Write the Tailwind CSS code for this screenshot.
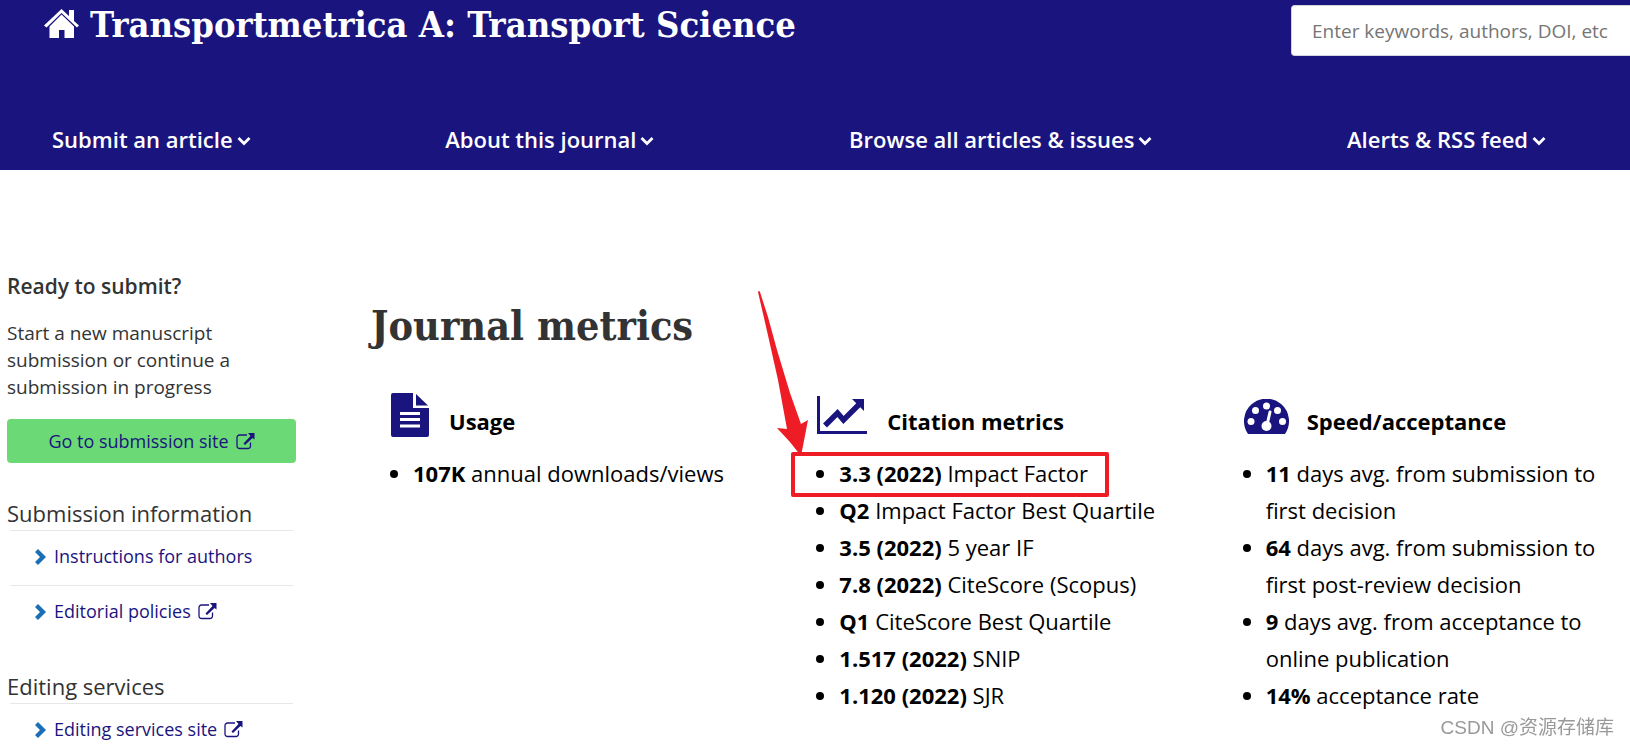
<!DOCTYPE html>
<html lang="en">
  <head>
    <meta charset="UTF-8" />
    <meta name="viewport" content="width=device-width, initial-scale=1.0" />
    <script src="https://cdn.jsdelivr.net/npm/@tailwindcss/browser@4"></script>
    <title>Transportmetrica A: Transport Science</title>
  </head>
  <body class="min-h-screen overflow-hidden bg-white font-['Open_Sans','Noto_Sans_CJK_SC',sans-serif] text-black">
    <!-- Shared icons -->
    <svg class="hidden">
      <symbol id="chevron-down" viewBox="0 0 14 10">
        <path d="M1.5 2 7 7.5 12.5 2" fill="none" stroke="currentColor" stroke-width="2.8" />
      </symbol>
      <symbol id="chevron-right" viewBox="0 0 12 16">
        <path d="M3 0 11 8 3 16 0 13 5 8 0 3Z" fill="currentColor" />
      </symbol>
      <symbol id="external" viewBox="0 0 19 17">
        <path d="M11 2H3.5A2.5 2.5 0 0 0 1 4.5V13a2.5 2.5 0 0 0 2.5 2.5H12A2.5 2.5 0 0 0 14.5 13V9.5" fill="none" stroke="currentColor" stroke-width="1.3" />
        <path d="M12 0H18.5V6.5L16.5 5 9 12 7.5 10.5 14.5 3Z" fill="currentColor" />
      </symbol>
    </svg>

    <!-- Header -->
    <header class="bg-[#1a147e] text-white">
      <div class="flex items-start justify-between pl-11">
        <a href="#" class="flex items-center gap-[10px]">
          <svg class="h-8 w-9" viewBox="0 0 36 32" fill="currentColor">
            <path d="M17.5 1 25 8V2H30V13L35 17.5 33 19.5 17.5 5 2.5 19.5 0 17.5Z" />
            <path d="M17.5 6.5 30 18.5V30H20.5V22H15V30H5.5V18.5Z" />
          </svg>
          <h1 class="font-['DejaVu_Serif_Condensed','DejaVu_Serif',serif] text-[36px] leading-12 font-bold">Transportmetrica A: Transport Science</h1>
        </a>
        <div class="w-[339px] pt-[5px]">
          <input type="text" aria-label="Search" placeholder="Enter keywords, authors, DOI, etc" class="h-[51px] w-full rounded-l border border-r-0 border-gray-300 bg-white pl-5 text-[19px] text-gray-700 placeholder:text-[#757575]" />
        </div>
      </div>
      <nav class="mt-[61px] flex justify-between pr-[84px] pb-[9px] pl-[52px] text-[22px] leading-11 font-semibold">
        <button class="flex items-center gap-1">Submit an article <svg class="mt-1 h-[10px] w-[14px]"><use href="#chevron-down" /></svg></button>
        <button class="flex items-center gap-1">About this journal <svg class="mt-1 h-[10px] w-[14px]"><use href="#chevron-down" /></svg></button>
        <button class="flex items-center gap-1">Browse all articles &amp; issues <svg class="mt-1 h-[10px] w-[14px]"><use href="#chevron-down" /></svg></button>
        <button class="flex items-center gap-1">Alerts &amp; RSS feed <svg class="mt-1 h-[10px] w-[14px]"><use href="#chevron-down" /></svg></button>
      </nav>
    </header>

    <div class="flex pt-[100px]">
      <!-- Sidebar -->
      <aside class="w-[371px] shrink-0 pr-[75px] pl-[7px] text-[#333]">
        <h2 class="text-[21px] leading-8 font-semibold">Ready to submit?</h2>
        <p class="mt-[18px] text-[19px] leading-[27px]">Start a new manuscript submission or continue a submission in progress</p>
        <a href="#" class="mt-[18px] flex h-11 items-center justify-center gap-[7px] rounded bg-[#6cd977] text-[18px] font-medium text-[#1a147e]">
          Go to submission site
          <svg class="h-[17px] w-[19px]"><use href="#external" /></svg>
        </a>

        <h2 class="mt-[34px] text-[22px] leading-8">Submission information</h2>
        <ul class="mt-px mr-[3px] ml-[3px] text-[18px] leading-[51px] font-medium text-[#1a147e]">
          <li class="h-[55px] border-t border-gray-200">
            <a href="#" class="ml-[25px] flex items-center gap-[7px]"><svg class="h-4 w-3 text-[#1a6fb5]"><use href="#chevron-right" /></svg>Instructions for authors</a>
          </li>
          <li class="h-[55px] border-t border-gray-200">
            <a href="#" class="ml-[25px] flex items-center gap-[7px]"><svg class="h-4 w-3 text-[#1a6fb5]"><use href="#chevron-right" /></svg>Editorial policies <svg class="h-[17px] w-[19px]"><use href="#external" /></svg></a>
          </li>
        </ul>

        <h2 class="mt-[30px] text-[22px] leading-8">Editing services</h2>
        <ul class="mt-px mr-[3px] ml-[3px] text-[18px] leading-[51px] font-medium text-[#1a147e]">
          <li class="h-[55px] border-t border-gray-200">
            <a href="#" class="ml-[25px] flex items-center gap-[7px]"><svg class="h-4 w-3 text-[#1a6fb5]"><use href="#chevron-right" /></svg>Editing services site <svg class="h-[17px] w-[19px]"><use href="#external" /></svg></a>
          </li>
        </ul>
      </aside>

      <!-- Metrics -->
      <main class="flex-1 pt-[28px]">
        <h2 class="font-['DejaVu_Serif_Condensed','DejaVu_Serif',serif] text-[41px] leading-[56px] font-bold text-[#333]">Journal metrics</h2>
        <div class="mt-[34px] grid grid-cols-3 gap-x-10 pl-5 text-[22px]">
          <section>
            <h3 class="flex h-[60px] gap-5 font-bold">
              <svg class="mt-[5px] h-11 w-[38px]" viewBox="0 0 38 44">
                <path d="M2 0H22V15H38V42a2 2 0 0 1-2 2H2a2 2 0 0 1-2-2V2A2 2 0 0 1 2 0Z" fill="#1a147e" />
                <path d="M25 1 37 12.5H25Z" fill="#1a147e" />
                <path d="M9 20.5H29M9 26.5H29M9 33H29" stroke="#fff" stroke-width="3" />
              </svg>
              <span class="pt-[17px]">Usage</span>
            </h3>
            <ul class="mt-[7px] list-disc pl-[22px] leading-[37px]">
              <li><b>107K</b> annual downloads/views</li>
            </ul>
          </section>

          <section class="relative">
            <h3 class="flex h-[60px] gap-5 font-bold">
              <svg class="mt-[8px] h-[38px] w-[50px]" viewBox="0 0 50 38">
                <path d="M1.5 0V36.5H50" fill="none" stroke="#1a147e" stroke-width="3" />
                <path d="M8 29.5 20.5 17 26.5 24 42 8.5" fill="none" stroke="#1a147e" stroke-width="5.5" />
                <path d="M35 3H47V15Z" fill="#1a147e" />
              </svg>
              <span class="pt-[17px]">Citation metrics</span>
            </h3>
            <ul class="mt-[7px] list-disc pl-[22px] leading-[37px]">
              <li><b>3.3 (2022)</b> Impact Factor</li>
              <li><b>Q2</b> Impact Factor Best Quartile</li>
              <li><b>3.5 (2022)</b> 5 year IF</li>
              <li><b>7.8 (2022)</b> CiteScore (Scopus)</li>
              <li><b>Q1</b> CiteScore Best Quartile</li>
              <li><b>1.517 (2022)</b> SNIP</li>
              <li><b>1.120 (2022)</b> SJR</li>
            </ul>
            <!-- Highlight box and arrow over the impact factor -->
            <div class="absolute top-[64px] -left-[26px] h-[45px] w-[318px] rounded-xs border-4 border-[#ee1c25]"></div>
            <svg class="absolute -top-[97px] -left-[59px] h-[166px] w-[52px]" viewBox="0 0 52 166">
              <path d="M0 1Q1-1 2 1L10 26 19 59 32 102 43 133 50 129 43 165Q32 150 19 137L29 138 20 89 9 40Z" fill="#ee1c25" />
            </svg>
          </section>

          <section>
            <h3 class="flex h-[60px] gap-[18px] font-bold">
              <svg class="mt-[11px] h-[35px] w-[45px]" viewBox="0 0 45 35">
                <path d="M4 35A22.5 22.5 0 1 1 41 35Z" fill="#1a147e" />
                <g fill="#fff">
                  <circle cx="7" cy="22.5" r="3.5" />
                  <circle cx="11.5" cy="11.5" r="3.5" />
                  <circle cx="22.5" cy="7" r="3.5" />
                  <circle cx="33.5" cy="11.5" r="3.5" />
                  <circle cx="38.5" cy="22.5" r="3.5" />
                  <circle cx="22.5" cy="27" r="5" />
                </g>
                <path d="M23 26 26 13" stroke="#fff" stroke-width="3" stroke-linecap="round" />
              </svg>
              <span class="pt-[17px]">Speed/acceptance</span>
            </h3>
            <ul class="mt-[7px] list-disc pr-4 pl-[22px] leading-[37px]">
              <li><b>11</b> days avg. from submission to first decision</li>
              <li><b>64</b> days avg. from submission to first post-review decision</li>
              <li><b>9</b> days avg. from acceptance to online publication</li>
              <li><b>14%</b> acceptance rate</li>
            </ul>
          </section>
        </div>
      </main>
    </div>

    <div class="fixed right-4 bottom-[5px] font-['Liberation_Sans','Noto_Sans_CJK_SC',sans-serif] text-[19px] leading-7 text-[#999]">CSDN @资源存储库</div>
  </body>
</html>
